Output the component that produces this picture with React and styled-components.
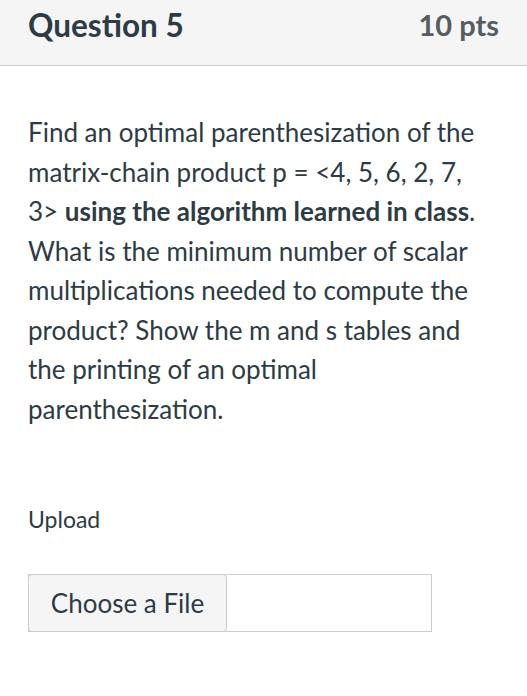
import React from "react";
import styled, { createGlobalStyle } from "styled-components";

const Global = createGlobalStyle`
  html, body { margin: 0; padding: 0; background: #fff; }
  body { font-family: Lato, "Open Sans", sans-serif; color: #2d3b45; }
`;

const Page = styled.div`
  width: 527px;
  height: 696px;
  background: #fff;
  overflow: hidden;
`;

const Header = styled.header`
  display: flex;
  align-items: center;
  justify-content: space-between;
  height: 66px;
  padding: 0 28px;
  background: #f5f5f5;
  border-bottom: 1px solid #c7cdd1;
  box-sizing: border-box;
`;

const Title = styled.h2`
  margin: -16px 0 0;
  font-size: 31.5px;
  font-weight: 700;
  color: #2d3b45;
`;

const Points = styled.span`
  margin-top: -16px;
  font-size: 29px;
  font-weight: 700;
  color: #555c62;
`;

const Body = styled.div`
  padding: 47px 45px 0 28px;
`;

const Question = styled.p`
  margin: 0;
  font-size: 26px;
  line-height: 39.5px;
  color: #2d3b45;
`;

const Bold = styled.strong`
  font-weight: 700;
`;

const Label = styled.div`
  margin-top: 76px;
  font-size: 23px;
  color: #2d3b45;
`;

const FileBox = styled.div`
  display: flex;
  margin-top: 41px;
  width: 404px;
  height: 58px;
  border: 1px solid #c7cdd1;
  box-sizing: border-box;
`;

const FileButton = styled.button`
  width: 199px;
  margin: -1px 0 -1px -1px;
  background: #f5f5f5;
  border: 1px solid #c7cdd1;
  border-radius: 4px;
  font-family: Lato, sans-serif;
  font-size: 26px;
  color: #2d3b45;
  padding: 0;
`;

export default function App() {
  return (
    <Page>
      <Global />
      <Header>
        <Title>Question 5</Title>
        <Points>10 pts</Points>
      </Header>
      <Body>
        <Question>
          Find an optimal parenthesization of the matrix-chain product p = &lt;4, 5, 6, 2, 7,
          3&gt; <Bold>using the algorithm learned in class</Bold>. What is the minimum number
          of scalar multiplications needed to compute the product? Show the m and s tables and
          the printing of an optimal parenthesization.
        </Question>
        <Label>Upload</Label>
        <FileBox>
          <FileButton>Choose a File</FileButton>
        </FileBox>
      </Body>
    </Page>
  );
}
